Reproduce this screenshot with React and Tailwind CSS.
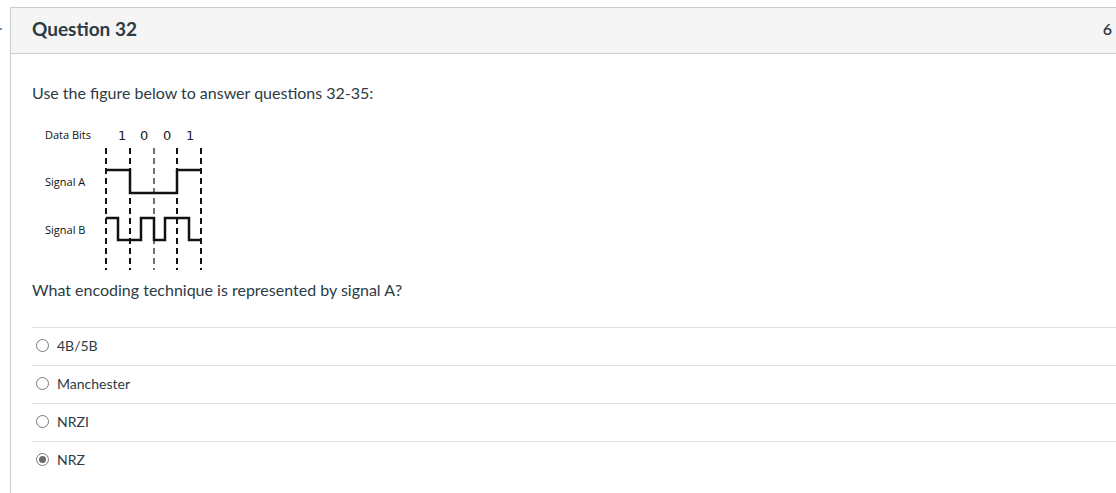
import React from 'react';

const answers = [
  { label: '4B/5B', checked: false },
  { label: 'Manchester', checked: false },
  { label: 'NRZI', checked: false },
  { label: 'NRZ', checked: true },
];

const Figure = () => {
  // bit boundaries, relative to svg origin (x=32, y=115 on page)
  const xs = [74, 98, 122, 145, 169];
  return (
    <svg width="180" height="158" viewBox="0 0 180 158" className="block">
      <g fontFamily="'Open Sans', 'Liberation Sans', sans-serif" fill="#111">
        <text x="13" y="23" fontSize="11">Data Bits</text>
        <text x="13" y="70" fontSize="11">Signal A</text>
        <text x="13" y="118" fontSize="11">Signal B</text>
      </g>
      <g fontFamily="'DejaVu Sans', 'Liberation Sans', sans-serif" fontSize="13" fill="#222">
        <text x="86" y="24">1</text>
        <text x="108" y="24">0</text>
        <text x="131" y="24">0</text>
        <text x="154" y="24">1</text>
      </g>
      {xs.map((x, i) => (
        <line
          key={x}
          x1={x}
          y1="32"
          x2={x}
          y2="154"
          stroke="#111"
          strokeWidth={i === 2 ? 1.2 : 2}
          strokeDasharray="6 4"
        />
      ))}
      <polyline
        points="74,54 98,54 98,77 145,77 145,54 169,54"
        fill="none"
        stroke="#111"
        strokeWidth="2.5"
      />
      <polyline
        points="74,102 86,102 86,124 109,124 109,102 122,102 122,124 133,124 133,102 157,102 157,124 169,124"
        fill="none"
        stroke="#111"
        strokeWidth="2.5"
      />
    </svg>
  );
};

const Radio = ({ checked }) => (
  <span className="flex h-[13px] w-[13px] items-center justify-center rounded-full border border-[#7a7a7a] bg-white">
    {checked && <span className="h-[7px] w-[7px] rounded-full bg-[#6b6b6b]" />}
  </span>
);

export default function App() {
  return (
    <div
      className="relative h-[493px] w-full overflow-hidden bg-white pl-[10px] pt-[7px] text-[#2d3b45]"
      style={{ fontFamily: "Lato, 'Open Sans', sans-serif" }}
    >
      <span className="absolute left-0 top-[28px] h-[2px] w-[2px] bg-[#6d8fc4]" />
      <div className="h-[500px] w-[1130px] border-l border-t border-[#c7cdd1]">
        <div className="flex h-[46px] items-center justify-between border-b border-[#c7cdd1] bg-[#f5f5f5] pb-[4px] pl-[21px] pr-[28px]">
          <h2 className="text-[19px] font-bold leading-none">Question 32</h2>
          <span className="text-[16px] font-semibold leading-none">6</span>
        </div>

        <div className="pl-[21px] pt-[27px]">
          <p className="text-[16px] leading-6">Use the figure below to answer questions 32-35:</p>
          <div className="mt-[11px]">
            <Figure />
          </div>
          <p className="mt-[4px] text-[16px] leading-6">What encoding technique is represented by signal A?</p>

          <div className="mt-[25px]">
            {answers.map((a) => (
              <div key={a.label} className="flex h-[38px] items-center gap-[8px] border-t border-[#dde0e3] pb-[2px] pl-[4px]">
                <Radio checked={a.checked} />
                <span className="text-[14px] leading-5">{a.label}</span>
              </div>
            ))}
          </div>
        </div>
      </div>
    </div>
  );
}
